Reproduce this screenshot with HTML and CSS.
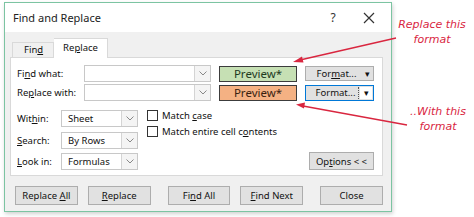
FILE: index.html
```html
<!DOCTYPE html>
<html lang="en">
  <head>
    <meta charset="UTF-8" />
    <title>Find and Replace</title>
    <link rel="stylesheet" href="styles.css">
  </head>
  <body>
    <div class="dialog">
      <div class="titlebar">
        <span class="title">Find and Replace</span>
        <span class="help">?</span>
        <span class="close-x">
          <svg width="12" height="12" viewBox="0 0 12 12"><path d="M1 1L11 11M11 1L1 11" stroke="#333" stroke-width="1.2" fill="none"/></svg>
        </span>
      </div>
      <div class="client">
        <div class="tabs">
          <div class="tab">Fin<u>d</u></div>
          <div class="tab active">Re<u>p</u>lace</div>
        </div>
        <div class="panel">
          <div class="find-grid">
            <label>Fi<u>n</u>d what:</label>
            <div class="combo"><span class="val"></span><span class="drop"><svg width="8" height="5" viewBox="0 0 8 5"><path d="M0.5 0.5L4 4L7.5 0.5" stroke="#888" fill="none"/></svg></span></div>
            <div class="preview green">Preview*</div>
            <div class="fmt"><span class="fmt-label">For<u>m</u>at...</span><span class="caret">&#9662;</span></div>

            <label>Re<u>p</u>lace with:</label>
            <div class="combo"><span class="val"></span><span class="drop"><svg width="8" height="5" viewBox="0 0 8 5"><path d="M0.5 0.5L4 4L7.5 0.5" stroke="#888" fill="none"/></svg></span></div>
            <div class="preview orange">Preview*</div>
            <div class="fmt focused"><span class="fmt-label">Format...</span><span class="caret">&#9662;</span></div>
          </div>

          <div class="options">
            <div class="opt-grid">
              <label>Wit<u>h</u>in:</label>
              <div class="combo small"><span class="val">Sheet</span><span class="drop"><svg width="8" height="5" viewBox="0 0 8 5"><path d="M0.5 0.5L4 4L7.5 0.5" stroke="#888" fill="none"/></svg></span></div>
              <label><u>S</u>earch:</label>
              <div class="combo small"><span class="val">By Rows</span><span class="drop"><svg width="8" height="5" viewBox="0 0 8 5"><path d="M0.5 0.5L4 4L7.5 0.5" stroke="#888" fill="none"/></svg></span></div>
              <label><u>L</u>ook in:</label>
              <div class="combo small"><span class="val">Formulas</span><span class="drop"><svg width="8" height="5" viewBox="0 0 8 5"><path d="M0.5 0.5L4 4L7.5 0.5" stroke="#888" fill="none"/></svg></span></div>
            </div>
            <div class="checks">
              <div class="check"><span class="box"></span><span>Match <u>c</u>ase</span></div>
              <div class="check"><span class="box"></span><span>Match entire cell c<u>o</u>ntents</span></div>
            </div>
            <div class="opt-right">
              <button class="btn options-btn">Op<u>t</u>ions &lt; &lt;</button>
            </div>
          </div>
        </div>
        <div class="buttons">
          <button class="btn">Replace <u>A</u>ll</button>
          <button class="btn"><u>R</u>eplace</button>
          <button class="btn gap-l">Fi<u>n</u>d All</button>
          <button class="btn"><u>F</u>ind Next</button>
          <button class="btn gap-l">Close</button>
        </div>
      </div>
    </div>

    <div class="note note-top">Replace this<br>format</div>
    <div class="note note-bottom">..With this<br>format</div>
    <svg class="arrows" width="474" height="217" viewBox="0 0 474 217">
      <line x1="396" y1="38" x2="300" y2="60" stroke="#d9263f" stroke-width="1.3"/>
      <path d="M293 62L302 56.5L303.5 62.5Z" fill="#d9263f"/>
      <line x1="407" y1="125" x2="303" y2="106" stroke="#d9263f" stroke-width="1.3"/>
      <path d="M296 104.5L305 102.5L304 108.5Z" fill="#d9263f"/>
    </svg>
  </body>
</html>
```

FILE: styles.css
```css
body {
  margin: 0;
  padding: 0;
  background: #fff;
  font-family: "Noto Sans", "Open Sans", sans-serif;
  font-size: 10px;
  color: #111;
  position: relative;
  width: 474px;
  height: 217px;
  overflow: hidden;
}
u {
  text-decoration: underline;
  text-underline-offset: 1px;
}
.dialog {
  margin: 2px 0 0 4px;
  width: 388px;
  height: 210px;
  box-sizing: border-box;
  border: 1px solid #7cc4a2;
  background: #f0f0f0;
  box-shadow: 1px 2px 4px rgba(0, 0, 0, 0.18);
  display: flex;
  flex-direction: column;
}
.titlebar {
  height: 29px;
  background: #fff;
  display: flex;
  align-items: center;
  padding-left: 8px;
  flex-shrink: 0;
}
.title {
  font-size: 11px;
  color: #222;
  flex: 1;
}
.help {
  font-size: 12px;
  color: #333;
  width: 20px;
  margin-right: 18px;
  text-align: center;
}
.close-x {
  width: 16px;
  margin-right: 14px;
  display: flex;
  justify-content: center;
}
.client {
  flex: 1;
  padding: 7px 8px 0 5px;
}
.tabs {
  display: flex;
  align-items: flex-end;
  height: 18px;
  position: relative;
  z-index: 1;
  padding-left: 2px;
}
.tab {
  height: 14px;
  line-height: 14px;
  padding: 0 10px 0 11px;
  border: 1px solid #d9d9d9;
  border-bottom: none;
  background: #f0f0f0;
  font-size: 9.5px;
}
.tab.active {
  height: 19px;
  line-height: 17px;
  margin-bottom: -1px;
  background: #fff;
  padding: 0 9px 0 9px;
  border-left: none;
}
.panel {
  height: 119px;
  box-sizing: border-box;
  background: #fff;
  border: 1px solid #d9d9d9;
  padding: 7px 8px 0 6px;
}
.find-grid {
  display: grid;
  grid-template-columns: 67px 127px 86px 77px;
  row-gap: 2px;
  align-items: center;
}
.find-grid .preview,
.find-grid .fmt {
  margin-left: 8px;
}
.find-grid label,
.opt-grid label {
  font-size: 9.5px;
}
.combo {
  height: 17px;
  box-sizing: border-box;
  border: 1px solid #c8c8c8;
  background: #fff;
  display: flex;
}
.combo .val {
  flex: 1;
  padding-left: 6px;
  line-height: 15px;
  font-size: 9.5px;
}
.combo .drop {
  width: 15px;
  border-left: 1px solid #d4d4d4;
  background: #f4f4f4;
  display: flex;
  align-items: center;
  justify-content: center;
}
.preview {
  height: 16px;
  box-sizing: border-box;
  border: 1px solid #3c3c3c;
  text-align: center;
  line-height: 14px;
  font-size: 11.5px;
  color: #1f3a1f;
}
.preview.green {
  background: #c6e0b4;
}
.preview.orange {
  background: #f4b183;
  color: #3a1f10;
}
.fmt {
  height: 15px;
  box-sizing: border-box;
  border: 1px solid #adadad;
  background: #e1e1e1;
  display: flex;
  align-items: center;
  font-size: 9.5px;
}
.fmt-label {
  flex: 1;
  text-align: center;
  padding-left: 6px;
}
.caret {
  width: 12px;
  text-align: center;
  font-size: 9px;
}
.fmt.focused {
  border: 1px solid #0078d7;
  height: 16px;
  padding: 1px;
}
.fmt.focused .fmt-label {
  border-right: 1px dotted #555;
  line-height: 12px;
  background: #e1e1e1;
}
.fmt.focused .caret {
  background: #fff;
  height: 12px;
  line-height: 12px;
  margin-left: 1px;
}
.options {
  display: flex;
  margin-top: 9px;
}
.opt-grid {
  display: grid;
  grid-template-columns: 44px 77px;
  row-gap: 4.5px;
  align-items: center;
}
.combo.small {
  height: 17px;
}
.checks {
  margin-left: 9px;
  display: flex;
  flex-direction: column;
  gap: 5px;
}
.check {
  display: flex;
  align-items: center;
  font-size: 9.5px;
  height: 11px;
}
.box {
  width: 11px;
  height: 11px;
  box-sizing: border-box;
  border: 1px solid #333;
  background: #fff;
  margin-right: 4px;
}
.opt-right {
  flex: 1;
  display: flex;
  align-items: flex-end;
  justify-content: flex-end;
}
.btn {
  font-family: "Noto Sans", "Open Sans", sans-serif;
  font-size: 9.5px;
  color: #111;
  height: 19px;
  width: 63px;
  padding: 0;
  background: #e1e1e1;
  border: 1px solid #adadad;
  border-radius: 0;
}
.options-btn {
  width: 65px;
  height: 18px;
}
.buttons {
  display: flex;
  margin-top: 10px;
  padding-left: 5px;
  gap: 10px;
}
.buttons .gap-l {
  margin-left: 7px;
}
.note {
  position: absolute;
  font-family: "DejaVu Sans", sans-serif;
  font-style: italic;
  font-size: 11px;
  color: #d9263f;
  text-align: center;
  line-height: 15px;
}
.note-top {
  left: 396px;
  top: 17px;
  width: 72px;
}
.note-bottom {
  left: 406px;
  top: 104px;
  width: 64px;
}
.arrows {
  position: absolute;
  left: 0;
  top: 0;
  pointer-events: none;
}
```
